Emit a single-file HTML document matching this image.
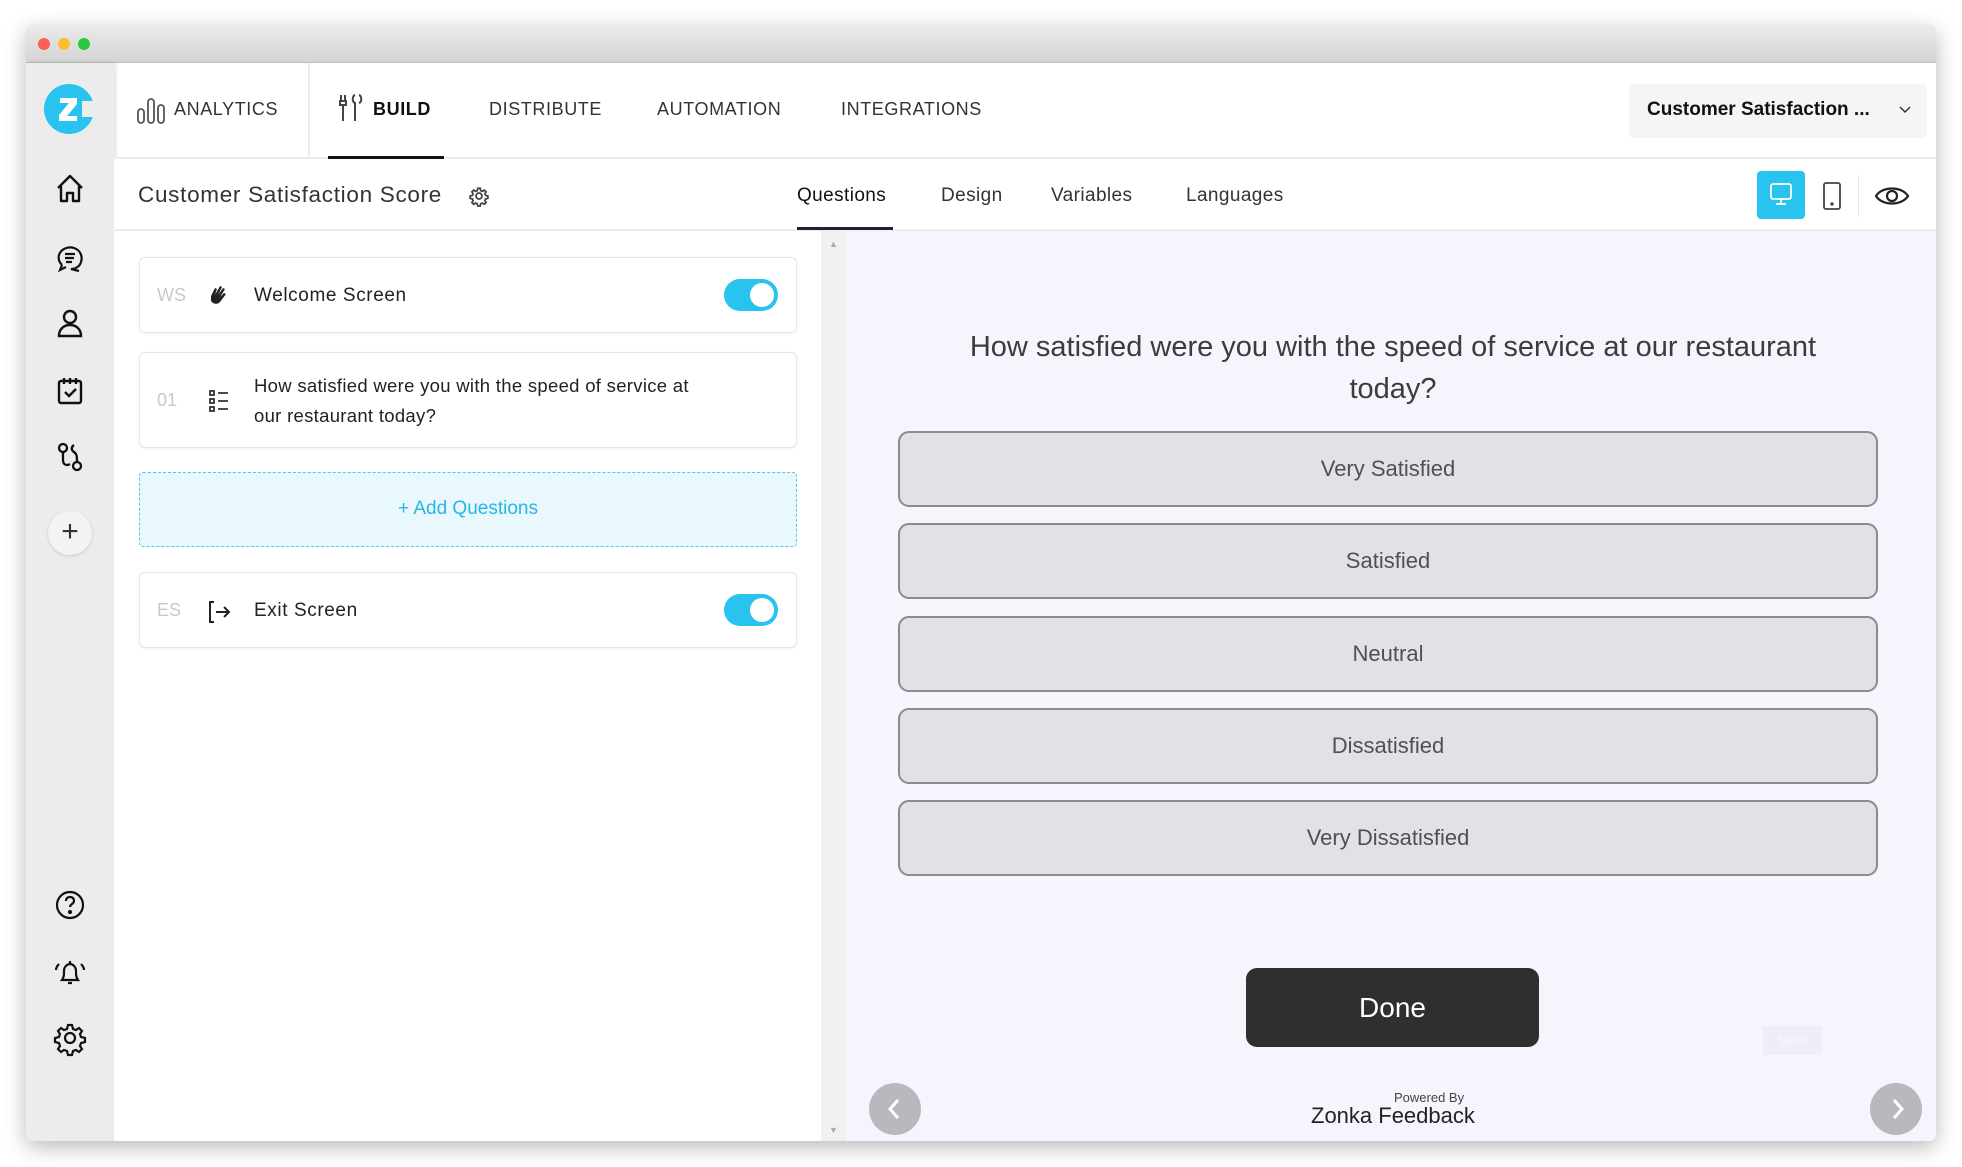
<!DOCTYPE html>
<html><head><meta charset="utf-8">
<style>
*{box-sizing:border-box;margin:0;padding:0}
body{width:1962px;height:1167px;background:#fff;font-family:"Liberation Sans",sans-serif;position:relative;overflow:hidden;color:#222}
.a{position:absolute}
.win{left:26px;top:25px;width:1910px;height:1116px;border-radius:7px;box-shadow:0 6px 22px rgba(0,0,0,.28);overflow:hidden;background:#fff}
.tb{left:0;top:0;width:1910px;height:38px;background:linear-gradient(#ebebeb,#d4d4d4);border-bottom:1px solid #bdbdbd}
.dot{width:12px;height:12px;border-radius:50%;top:13px}
.side{left:0;top:38px;width:88px;height:1078px;background:#ececec;box-shadow:2px 0 4px rgba(0,0,0,.12)}
.ic{left:22px;width:44px;height:44px}
.nav{font-size:18px;letter-spacing:0.6px;color:#333;top:74px}
.card{left:113px;width:658px;background:#fff;border:1px solid #e6e6e6;border-radius:6px;box-shadow:0 1px 3px rgba(0,0,0,.06)}
.lbl{left:17px;color:#c8c8c8;font-size:18px}
.tog{right:18px;width:54px;height:32px;border-radius:16px;background:#29c3ef}
.tog::after{content:"";position:absolute;right:4px;top:4px;width:24px;height:24px;border-radius:50%;background:#fff}
.opt{left:872px;width:980px;height:76px;background:#e2e1e8;border:2px solid #8c8c8c;border-radius:11px;text-align:center;line-height:72px;font-size:22px;color:#505050}
.tab{top:160px;font-size:19px;color:#333;letter-spacing:0.4px}
</style></head><body>
<div class="a win">
 <div class="a tb">
  <div class="a dot" style="left:12px;background:#fe5f57"></div>
  <div class="a dot" style="left:32px;background:#febc2e"></div>
  <div class="a dot" style="left:52px;background:#28c840"></div>
 </div>
 <div class="a side">
  <svg class="a" style="left:18px;top:20px" width="50" height="52" viewBox="0 0 50 52"><circle cx="25" cy="26" r="25" fill="#29c3ef"/><rect x="38" y="18" width="14" height="16" fill="#ececec"/><path d="M16 15h17v6l-10 12h10v5H15v-6l10-12h-9z" fill="#fff"/></svg>
  <svg class="a ic" style="top:104px" viewBox="0 0 44 44" fill="none" stroke="#111" stroke-width="2.4" stroke-linejoin="round"><path d="M10 21L22 9l12 12M13 19v15h6v-8h6v8h6V19"/></svg>
  <svg class="a ic" style="top:172px" viewBox="0 0 44 44" fill="none" stroke="#111" stroke-width="2.2"><path d="M14 30c-3-3-4-6-3-10 2-6 9-9 15-7s9 8 7 14c-1 4-5 7-10 7l8 2M14 30l-2 5 6-3"/><path d="M17 19h10M17 23h9M18 27h6"/></svg>
  <svg class="a ic" style="top:239px" viewBox="0 0 44 44" fill="none" stroke="#111" stroke-width="2.4"><circle cx="22" cy="15" r="6"/><path d="M11 34c0-7 5-11 11-11s11 4 11 11z"/></svg>
  <svg class="a ic" style="top:306px" viewBox="0 0 44 44" fill="none" stroke="#111" stroke-width="2.4"><rect x="11" y="12" width="22" height="22" rx="2"/><path d="M16 9v6M22 9v6M28 9v6M17 23l4 4 7-7"/></svg>
  <svg class="a ic" style="top:372px" viewBox="0 0 44 44" fill="none" stroke="#111" stroke-width="2.3"><circle cx="15" cy="13" r="4"/><circle cx="29" cy="31" r="4"/><path d="M15 17v8c0 5 4 6 7 4M26 10c-3 2-3 5 0 7 3 2 3 5 3 10"/></svg>
  <div class="a" style="left:22px;top:448px;width:44px;height:44px;border-radius:50%;background:#f3f3f3;box-shadow:0 1px 3px rgba(0,0,0,.15);text-align:center;line-height:42px;font-size:30px;color:#333">+</div>
  <svg class="a ic" style="top:820px" viewBox="0 0 44 44" fill="none" stroke="#111" stroke-width="2.2"><circle cx="22" cy="22" r="13"/><path d="M18 18c0-3 2-4 4-4s4 1 4 4-4 3-4 6"/><circle cx="22" cy="29" r="1" fill="#111"/></svg>
  <svg class="a ic" style="top:887px" viewBox="0 0 44 44" fill="none" stroke="#111" stroke-width="2.2"><path d="M14 30c2-3 2-5 2-9 0-4 3-7 6-7s6 3 6 7c0 4 0 6 2 9zM22 11v3M20 33h4M11 14c-2 2-3 4-3 6M33 14c2 2 3 4 3 6"/></svg>
  <svg class="a ic" style="top:953px" viewBox="0 0 44 44" fill="none" stroke="#111" stroke-width="2.2"><circle cx="22" cy="22" r="5"/><path d="M20 9h4l1 4 3 1 3-2 3 3-2 3 1 3 4 1v4l-4 1-1 3 2 3-3 3-3-2-3 1-1 4h-4l-1-4-3-1-3 2-3-3 2-3-1-3-4-1v-4l4-1 1-3-2-3 3-3 3 2 3-1z"/></svg>
 </div>
 <div class="a" style="left:88px;top:38px;width:1822px;height:96px;border-bottom:2px solid #ececec"></div>
 <div class="a" style="left:282px;top:38px;width:2px;height:96px;background:#ececec"></div>
 <svg class="a" style="left:110px;top:70px" width="32" height="30" viewBox="0 0 32 30" fill="none" stroke="#555" stroke-width="1.8"><rect x="2" y="14" width="6" height="14" rx="3"/><rect x="12" y="4" width="6" height="24" rx="3"/><rect x="22" y="10" width="6" height="18" rx="3"/></svg>
 <div class="a nav" style="left:148px">ANALYTICS</div>
 <svg class="a" style="left:310px;top:68px" width="28" height="32" viewBox="0 0 28 32" fill="none" stroke="#444" stroke-width="2"><path d="M5 2v6M9 2v6M4 8h6v4H4zM7 12v16M19 2c-3 1-3 7 0 8v18M23 2c3 1 3 7 0 8"/></svg>
 <div class="a nav" style="left:347px;font-weight:bold;color:#111">BUILD</div>
 <div class="a" style="left:302px;top:131px;width:116px;height:3px;background:#111"></div>
 <div class="a nav" style="left:463px">DISTRIBUTE</div>
 <div class="a nav" style="left:631px">AUTOMATION</div>
 <div class="a nav" style="left:815px">INTEGRATIONS</div>
 <div class="a" style="left:1603px;top:59px;width:298px;height:54px;background:#f5f5f5;border-radius:4px"></div>
 <div class="a" style="left:1621px;top:74px;font-size:19px;font-weight:bold;color:#111">Customer Satisfaction ...</div>
 <svg class="a" style="left:1872px;top:80px" width="14" height="10" viewBox="0 0 14 10" fill="none" stroke="#333" stroke-width="1.5"><path d="M2 2l5 5 5-5"/></svg>
 <div class="a" style="left:88px;top:134px;width:1822px;height:72px;border-bottom:2px solid #ececec;background:#fff"></div>
 <div class="a" style="left:112px;top:157px;font-size:22.5px;letter-spacing:0.7px;color:#333">Customer Satisfaction Score</div>
 <svg class="a" style="left:440px;top:158px" width="26" height="26" viewBox="0 0 44 44" fill="none" stroke="#444" stroke-width="3"><circle cx="22" cy="22" r="5"/><path d="M20 9h4l1 4 3 1 3-2 3 3-2 3 1 3 4 1v4l-4 1-1 3 2 3-3 3-3-2-3 1-1 4h-4l-1-4-3-1-3 2-3-3 2-3-1-3-4-1v-4l4-1 1-3-2-3 3-3 3 2 3-1z"/></svg>
 <div class="a tab" style="left:771px;color:#111">Questions</div>
 <div class="a" style="left:771px;top:202px;width:96px;height:3px;background:#1a2233"></div>
 <div class="a tab" style="left:915px">Design</div>
 <div class="a tab" style="left:1025px">Variables</div>
 <div class="a tab" style="left:1160px">Languages</div>
 <div class="a" style="left:1731px;top:146px;width:48px;height:48px;background:#29c3ef;border-radius:4px"></div>
 <svg class="a" style="left:1743px;top:157px" width="24" height="26" viewBox="0 0 24 26" fill="none" stroke="#fff" stroke-width="1.8"><rect x="2" y="2" width="20" height="15" rx="2"/><path d="M12 17v5M7 22h10"/></svg>
 <svg class="a" style="left:1796px;top:156px" width="20" height="30" viewBox="0 0 20 30" fill="none" stroke="#444" stroke-width="1.8"><rect x="2" y="2" width="16" height="26" rx="2"/><circle cx="10" cy="23" r="0.8" fill="#444"/></svg>
 <div class="a" style="left:1832px;top:150px;width:1px;height:42px;background:#e5e5e5"></div>
 <svg class="a" style="left:1848px;top:158px" width="36" height="26" viewBox="0 0 36 26" fill="none" stroke="#222" stroke-width="2.2"><path d="M2 13C8 3 28 3 34 13 28 23 8 23 2 13z"/><circle cx="18" cy="13" r="5"/></svg>
 <div class="a" style="left:88px;top:206px;width:707px;height:910px;background:#fff"></div>
 <div class="a" style="left:795px;top:206px;width:25px;height:910px;background:#f1f1f1"></div>
 <div class="a" style="left:803px;top:214px;font-size:9px;color:#aaa">▲</div>
 <div class="a" style="left:803px;top:1100px;font-size:9px;color:#aaa">▼</div>
 <div class="a card" style="top:232px;height:76px">
  <div class="a lbl" style="top:27px">WS</div>
  <svg class="a" style="left:66px;top:26px" width="24" height="24" viewBox="0 0 24 24" fill="#222"><path d="M5 12l4-8 2 1-2 6 5-9 2 1-4 8 5-7 2 1-5 8 4-4 2 1-6 8c-3 3-7 2-9-1z"/></svg>
  <div class="a" style="left:114px;top:27px;font-size:19px;letter-spacing:0.6px;color:#222">Welcome Screen</div>
  <div class="a tog" style="top:21px"></div>
 </div>
 <div class="a card" style="top:327px;height:96px">
  <div class="a lbl" style="top:37px">01</div>
  <svg class="a" style="left:68px;top:36px" width="22" height="24" viewBox="0 0 22 24" fill="none" stroke="#333" stroke-width="1.8"><rect x="2" y="2" width="4" height="4"/><rect x="2" y="10" width="4" height="4"/><rect x="2" y="18" width="4" height="4"/><path d="M10 4h10M10 12h10M10 20h10"/></svg>
  <div class="a" style="left:114px;top:18px;width:450px;font-size:18.5px;letter-spacing:0.3px;line-height:30px;color:#222">How satisfied were you with the speed of service at our restaurant today?</div>
 </div>
 <div class="a" style="left:113px;top:447px;width:658px;height:75px;background:#e9f8fd;border:1.5px dashed #4cc9f0;border-radius:4px;text-align:center;line-height:72px;font-size:19px;color:#29b6e6">+ Add Questions</div>
 <div class="a card" style="top:547px;height:76px">
  <div class="a lbl" style="top:27px">ES</div>
  <svg class="a" style="left:66px;top:26px" width="26" height="26" viewBox="0 0 26 26" fill="none" stroke="#222" stroke-width="2"><path d="M8 3H4v20h4M10 13h13M18 8l5 5-5 5"/></svg>
  <div class="a" style="left:114px;top:27px;font-size:19px;letter-spacing:0.6px;color:#222">Exit Screen</div>
  <div class="a tog" style="top:21px"></div>
 </div>
 <div class="a" style="left:820px;top:206px;width:1090px;height:910px;background:#f6f5fd"></div>
 <div class="a" style="left:912px;top:301px;width:910px;text-align:center;font-size:29px;line-height:42px;color:#3c3c3c">How satisfied were you with the speed of service at our restaurant today?</div>
 <div class="a opt" style="top:406px">Very Satisfied</div>
 <div class="a opt" style="top:498px">Satisfied</div>
 <div class="a opt" style="top:591px">Neutral</div>
 <div class="a opt" style="top:683px">Dissatisfied</div>
 <div class="a opt" style="top:775px">Very Dissatisfied</div>
 <div class="a" style="left:1220px;top:943px;width:293px;height:79px;background:#2f2f2f;border-radius:11px;text-align:center;line-height:79px;font-size:28px;color:#fff">Done</div>
 <div class="a" style="left:1737px;top:1001px;width:59px;height:29px;background:#efeef6;text-align:center;line-height:29px;font-size:13px;color:#f8f8fc">Save</div>
 <div class="a" style="left:843px;top:1058px;width:52px;height:52px;border-radius:50%;background:#b9b8bf"></div>
 <svg class="a" style="left:858px;top:1072px" width="20" height="24" viewBox="0 0 20 24" fill="none" stroke="#fff" stroke-width="3"><path d="M14 3L6 12l8 9"/></svg>
 <div class="a" style="left:1844px;top:1058px;width:52px;height:52px;border-radius:50%;background:#b9b8bf"></div>
 <svg class="a" style="left:1862px;top:1072px" width="20" height="24" viewBox="0 0 20 24" fill="none" stroke="#fff" stroke-width="3"><path d="M6 3l8 9-8 9"/></svg>
 <div class="a" style="left:1368px;top:1065px;font-size:13px;color:#444">Powered By</div>
 <div class="a" style="left:1285px;top:1078px;font-size:22px;color:#222">Zonka Feedback</div>
</div>
</body></html>
